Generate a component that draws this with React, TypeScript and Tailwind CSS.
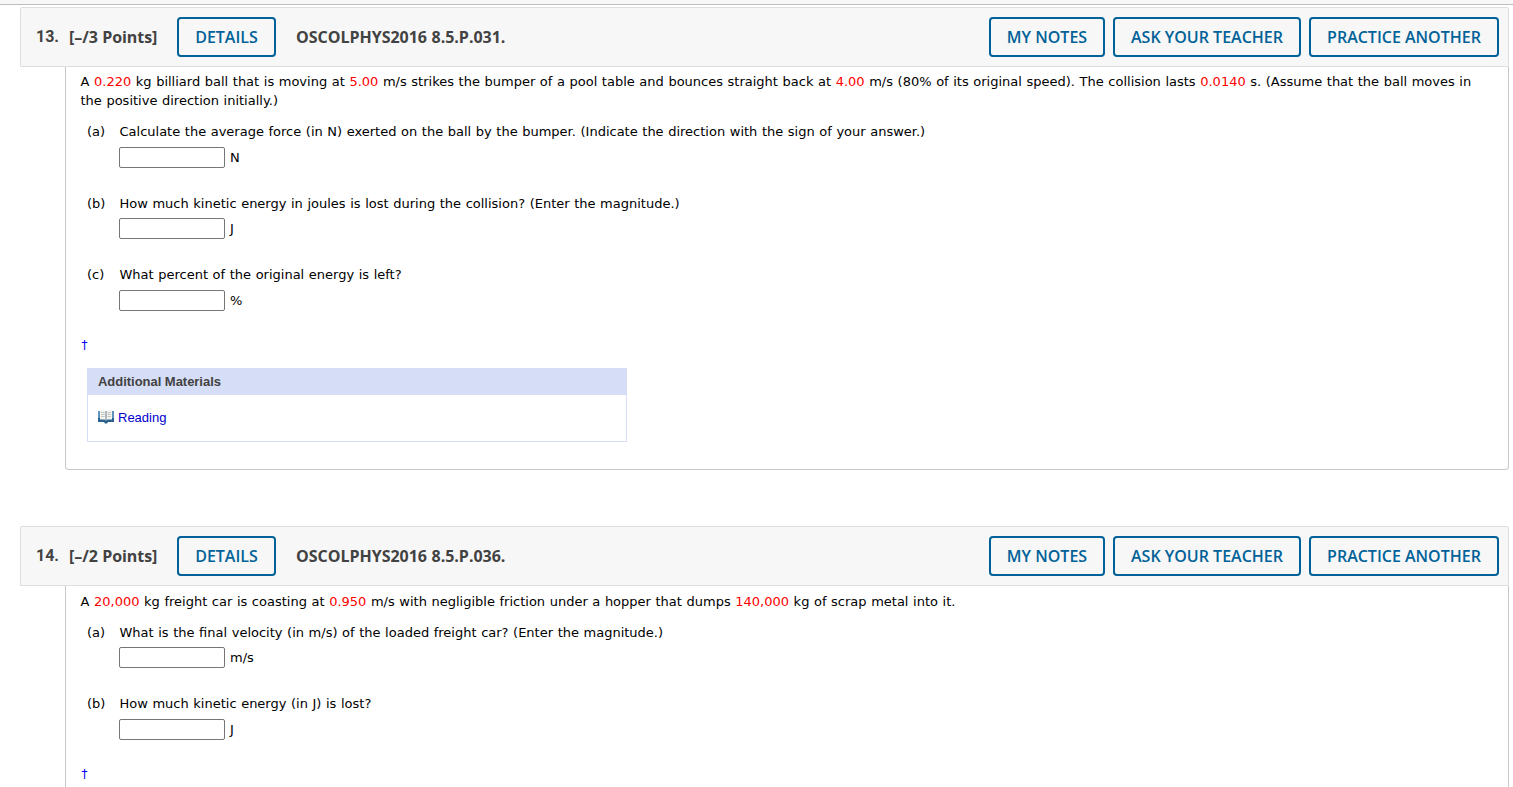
import type { ReactNode } from 'react';

type Part = { label: string; text: string; unit: string; tall?: boolean };

function Num({ children }: { children: ReactNode }) {
    return <span className="text-[#ff0000]">{children}</span>;
}

function HeaderButton({ children, className }: { children: ReactNode; className: string }) {
    return (
        <button className={`h-10 rounded-[4px] border-2 border-[#006298] text-center text-[16px] font-semibold whitespace-nowrap text-[#006298] ${className}`}>
            {children}
        </button>
    );
}

function QuestionHeader({ number, points, code }: { number: string; points: string; code: string }) {
    return (
        <header className="flex h-[60px] items-center rounded-t-[2px] border border-[#dedede] bg-[#f7f7f7] pr-[9px] pl-[15px] font-['Open_Sans',sans-serif] text-[16px] text-[#424242]">
            <span className="w-[33px] pb-0.5 font-['Roboto',sans-serif] font-bold">{number}</span>
            <span className="w-[108px] font-bold tracking-[-0.08px] whitespace-nowrap">{points}</span>
            <HeaderButton className="w-[99px]">DETAILS</HeaderButton>
            <span className="ml-5 font-bold tracking-[-0.02px] whitespace-nowrap">{code}</span>
            <div className="ml-auto flex gap-2">
                <HeaderButton className="w-[116px]">MY NOTES</HeaderButton>
                <HeaderButton className="w-[188px]">ASK YOUR TEACHER</HeaderButton>
                <HeaderButton className="w-[190px]">PRACTICE ANOTHER</HeaderButton>
            </div>
        </header>
    );
}

function PartList({ parts }: { parts: Part[] }) {
    return (
        <ol>
            {parts.map((part) => (
                <li key={part.label} className={`flex pl-[7px] ${part.tall ? 'h-[72px]' : 'h-[71px]'}`}>
                    <span className="w-8">{part.label}</span>
                    <div>
                        <p className="pl-[0.5px] whitespace-nowrap">{part.text}</p>
                        <div className={`flex items-center gap-[5px] ${part.tall ? 'mt-1.5' : 'mt-[5px]'}`}>
                            <input type="text" aria-label={part.label} className="h-[21px] w-[106px] rounded-[2px] border border-[#767676] bg-white px-1" />
                            <span>{part.unit}</span>
                        </div>
                    </div>
                </li>
            ))}
        </ol>
    );
}

function BookIcon() {
    return (
        <svg className="mb-0.5" width="16" height="14" viewBox="0 0 16 14" aria-hidden="true">
            <path d="M0 1h16v11h-6l-1 1.500H7L6 12H0z" fill="#2b618d" />
            <path d="M0 1h2v7H0zM14 1h2v7h-2z" fill="#5f93bb" />
            <path d="M2 0h4.500L8 1l1.500-1H14v9.500H9.500L8 10.500 6.500 9.500H2z" fill="#f3f3ef" />
            <path d="M3 2.500h3.500M3 4.500h3.500M3 6.500h3.500M9.500 2.500H13M9.500 4.500H13M9.500 6.500H13" stroke="#c4c4c0" />
            <path d="M8 1v9.500" stroke="#6d7f8f" />
        </svg>
    );
}

function FootnoteMark() {
    return <a className="block h-[31px] pl-[1.5px] text-[12px] leading-[17px] text-[#0000ee]">†</a>;
}

const bumperParts: Part[] = [
    { label: '(a)', text: 'Calculate the average force (in N) exerted on the ball by the bumper. (Indicate the direction with the sign of your answer.)', unit: 'N', tall: true },
    { label: '(b)', text: 'How much kinetic energy in joules is lost during the collision? (Enter the magnitude.)', unit: 'J' },
    { label: '(c)', text: 'What percent of the original energy is left?', unit: '%', tall: true },
];

const freightParts: Part[] = [
    { label: '(a)', text: 'What is the final velocity (in m/s) of the loaded freight car? (Enter the magnitude.)', unit: 'm/s' },
    { label: '(b)', text: 'How much kinetic energy (in J) is lost?', unit: 'J', tall: true },
];

export default function App() {
    return (
        <div className="h-[787px] w-[1513px] overflow-hidden bg-white font-['DejaVu_Sans',sans-serif] text-[13px] leading-[19px] text-black [word-spacing:0.45px]">
            <div className="h-[5px] border-b border-[#bdbdbd] bg-[#f7f7f7]" />
            <main className="pt-0.5 pr-1 pl-5">
                {/* Question 13 */}
                <section>
                    <QuestionHeader number="13." points="[–/3 Points]" code="OSCOLPHYS2016 8.5.P.031." />
                    <div className="ml-[45px] h-[403px] rounded-b-[4px] border border-t-0 border-[#c8c8c8] pt-[5px] pl-3.5">
                        <p className="pl-[0.5px] whitespace-nowrap">
                            A <Num>0.220</Num> kg billiard ball that is moving at <Num>5.00</Num> m/s strikes the bumper of a pool table and bounces straight back at <Num>4.00</Num> m/s (80% of its original speed). The collision lasts <Num>0.0140</Num> s. (Assume that the ball moves in
                            <br />
                            the positive direction initially.)
                        </p>
                        <div className="mt-3">
                            <PartList parts={bumperParts} />
                        </div>
                        <FootnoteMark />
                        <div className="ml-[7px] h-[74px] w-[540px] border border-[#d6ddf7] font-['Liberation_Sans',sans-serif] [word-spacing:0]">
                            <h3 className="h-[26px] bg-[#d6ddf7] pt-[3px] pl-2.5 font-bold tracking-[-0.03px] text-[#424242]">Additional Materials</h3>
                            <a className="flex items-center gap-1 pt-[13px] pl-2.5 text-[#0000cc]">
                                <BookIcon />
                                <span>Reading</span>
                            </a>
                        </div>
                    </div>
                </section>

                {/* Question 14 */}
                <section className="mt-14">
                    <QuestionHeader number="14." points="[–/2 Points]" code="OSCOLPHYS2016 8.5.P.036." />
                    <div className="ml-[45px] h-[403px] border border-t-0 border-[#c8c8c8] pt-1.5 pl-3.5">
                        <p className="pl-[0.5px] whitespace-nowrap">
                            A <Num>20,000</Num> kg freight car is coasting at <Num>0.950</Num> m/s with negligible friction under a hopper that dumps <Num>140,000</Num> kg of scrap metal into it.
                        </p>
                        <div className="mt-3">
                            <PartList parts={freightParts} />
                        </div>
                        <FootnoteMark />
                    </div>
                </section>
            </main>
        </div>
    );
}
